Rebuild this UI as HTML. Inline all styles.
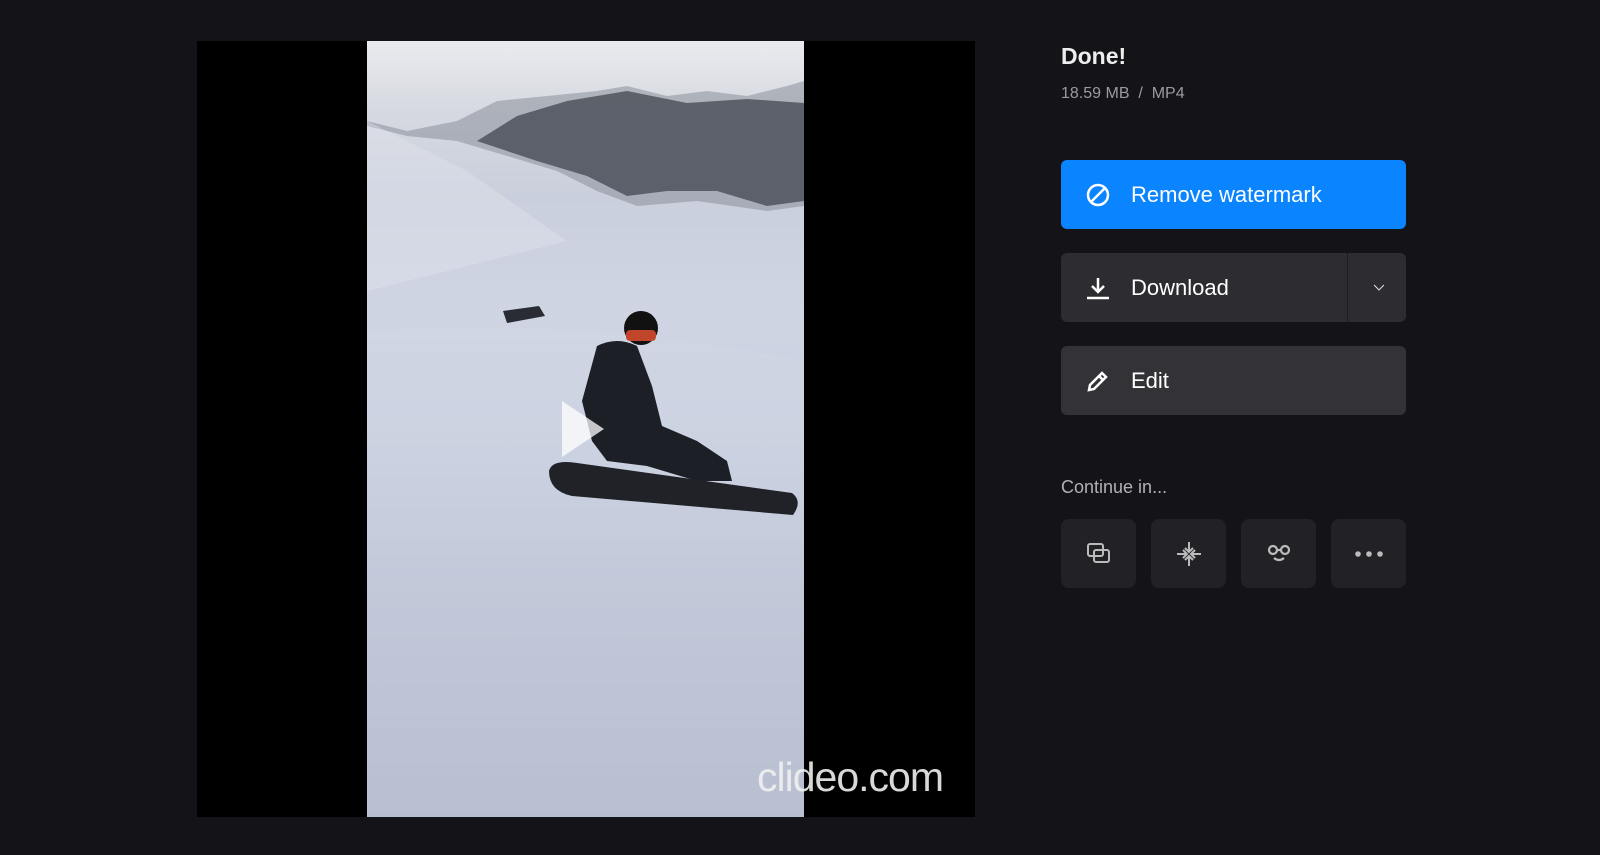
<!DOCTYPE html>
<html><head><style>
body{margin:0;width:1600px;height:855px;background:#141418;font-family:"Liberation Sans",sans-serif;position:relative;overflow:hidden}
.vid{position:absolute;left:197px;top:41px;width:778px;height:776px;background:#000;overflow:hidden}
.scene{position:absolute;left:170px;top:0;width:437px;height:776px;background:linear-gradient(180deg,#e9ebef 0%,#d6d9e0 9%,#c9cfdc 20%,#cfd5e3 35%,#c8cfdf 50%,#b9c0d3 70%,#a9b1c6 100%)}
.p{position:absolute;color:#fff}
.btn{position:absolute;left:1061px;width:345px;height:69px;border-radius:6px;display:flex;align-items:center;font-size:22px;color:#fff}
.btn svg{margin-left:25px;margin-right:21px}
.sq{position:absolute;top:519px;width:75px;height:69px;border-radius:8px;background:#222226;display:flex;align-items:center;justify-content:center}
</style></head><body>
<div class="vid">
 <div class="scene">
  <svg width="437" height="776" style="position:absolute;left:0;top:0">
   <path d="M0 80 L40 90 L90 80 L130 60 L180 55 L230 50 L260 45 L300 55 L340 50 L380 55 L420 45 L437 40 L437 165 L400 170 L330 160 L270 165 L230 150 L190 130 L140 115 L90 100 L40 95 L0 85 Z" fill="#8a8f9a" opacity=".55"/>
   <path d="M110 100 L150 75 L200 60 L260 50 L320 62 L380 58 L437 62 L437 160 L400 165 L350 150 L300 150 L260 155 L220 135 L170 120 Z" fill="#4d525c" opacity=".85"/>
   <path d="M0 80 L100 130 L200 200 L0 250 Z" fill="#e6e9f0" opacity=".35"/>
   <path d="M0 290 Q220 275 437 320 L437 776 L0 776 Z" fill="#d3d9e6" opacity=".35"/>
   <path d="M230 305 Q250 295 270 305 L285 345 L295 385 L330 400 L360 420 L365 440 L330 440 L280 425 L240 420 L225 400 L215 360 Z" fill="#1d1f26"/>
   <circle cx="274" cy="287" r="17" fill="#111"/>
   <rect x="259" y="289" width="30" height="11" rx="4" fill="#c0452a"/>
   <path d="M182 430 Q185 418 210 422 L425 452 Q436 460 426 474 L205 455 Q182 450 182 430 Z" fill="#202228"/>
   <path d="M136 270 L172 265 L178 275 L140 282 Z" fill="#2a2c33"/>
  </svg>
  <svg width="46" height="60" style="position:absolute;left:193px;top:358px"><path d="M2 2 L44 30 L2 58 Z" fill="#fff" opacity=".75"/></svg>
 </div>
 <div style="position:absolute;left:560px;top:713px;font-size:41px;color:#f0f0f0;letter-spacing:-1px;opacity:.9">clideo.com</div>
</div>
<div class="p" style="left:1061px;top:43px;font-size:23px;font-weight:bold;color:#eee">Done!</div>
<div class="p" style="left:1061px;top:85px;font-size:16px;color:#9a9aa0">18.59 MB &nbsp;/&nbsp; MP4</div>
<div class="btn" style="top:160px;background:#0a84ff"><svg width="24" height="24" viewBox="0 0 24 24" fill="none" stroke="#fff" stroke-width="2.5"><circle cx="12" cy="12" r="10"/><path d="M5 19L19 5"/></svg>Remove watermark</div>
<div class="btn" style="top:253px;background:#2d2d31"><svg width="24" height="24" viewBox="0 0 24 24" fill="none" stroke="#fff" stroke-width="2.5"><path d="M12 2v13M6 10l6 6 6-6M1 22h22"/></svg>Download
 <div style="position:absolute;right:0;top:0;width:58px;height:69px;border-left:1px solid #1c1c20;display:flex;align-items:center;justify-content:center"><svg width="22" height="13" viewBox="0 0 22 13" fill="none" stroke="#ddd" stroke-width="2"><path d="M2 2l9 9 9-9"/></svg></div></div>
<div class="btn" style="top:346px;background:#333337"><svg width="24" height="24" viewBox="0 0 24 24" fill="none" stroke="#fff" stroke-width="2.5"><path d="M3 21l1-5L16 4l4 4L8 20z M13 7l4 4"/></svg>Edit</div>
<div class="p" style="left:1061px;top:477px;font-size:18px;color:#b0b0b5">Continue in...</div>
<div class="sq" style="left:1061px"><svg width="26" height="26" viewBox="0 0 26 26" fill="none" stroke="#bbb" stroke-width="2"><rect x="2" y="3" width="15" height="12" rx="2"/><rect x="8" y="9" width="15" height="12" rx="2"/></svg></div>
<div class="sq" style="left:1151px"><svg width="28" height="28" viewBox="0 0 28 28" fill="none" stroke="#bbb" stroke-width="2"><path d="M14 2v9M10 8l4 4 4-4M14 26v-9M10 20l4-4 4 4M2 14h9M8 10l4 4-4 4M26 14h-9M20 10l-4 4 4 4"/></svg></div>
<div class="sq" style="left:1241px"><svg width="28" height="26" viewBox="0 0 28 26" fill="none" stroke="#bbb" stroke-width="2.2"><circle cx="8" cy="9" r="4"/><circle cx="20" cy="9" r="4"/><path d="M12 9h4M9 17q5 4 10 0"/></svg></div>
<div class="sq" style="left:1331px"><svg width="30" height="8"><circle cx="4" cy="4" r="2.8" fill="#bbb"/><circle cx="15" cy="4" r="2.8" fill="#bbb"/><circle cx="26" cy="4" r="2.8" fill="#bbb"/></svg></div>
</body></html>
